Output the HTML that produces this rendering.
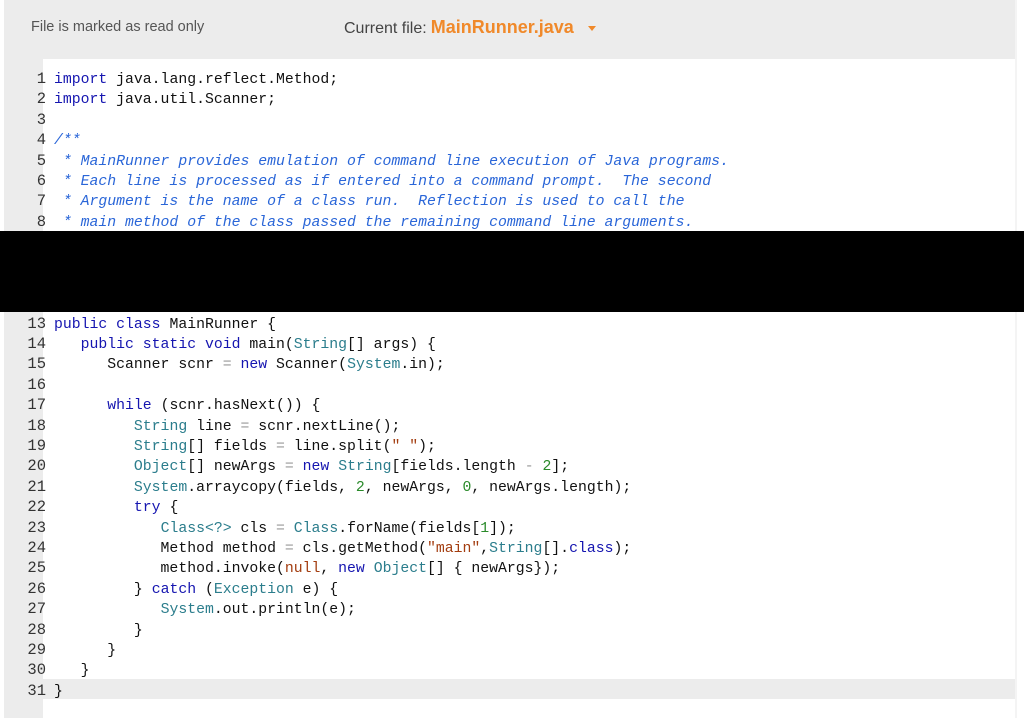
<!DOCTYPE html>
<html><head><meta charset="utf-8"><style>
*{margin:0;padding:0}
body{width:1024px;height:718px;background:#fff;position:relative;overflow:hidden;font-family:"Liberation Sans",sans-serif}
#top{position:absolute;left:4px;top:0;width:1011px;height:59px;background:#ececec}
#ro{position:absolute;left:27px;top:19px;font-size:14.5px;color:#555}
#cf{position:absolute;left:340px;top:17px;font-size:16px;color:#444}
#cf b{color:#f0892a;font-weight:bold;font-size:18px;margin-left:4px}
#cf i{display:inline-block;width:0;height:0;border-left:4px solid transparent;border-right:4px solid transparent;border-top:5px solid #f0892a;margin-left:14px;vertical-align:middle}
#gut{position:absolute;left:4px;top:59px;width:39px;height:659px;background:#ececec}
#edge{position:absolute;left:1015px;top:0;width:2px;height:718px;background:#f4f4f4}
#code{position:absolute;left:0;top:69px;font-family:"Liberation Mono",monospace;font-size:14.8px;color:#111}
.l{height:20.4px;line-height:20.4px;white-space:pre;position:relative}
.n{display:inline-block;width:54px;text-align:right;color:#333;padding-right:8px;box-sizing:border-box;font-size:15.5px}
.k{color:#1515b0}.t{color:#2b7d8c}.c{color:#2a66d8;font-style:italic}.g{color:#2a8a2a}.s{color:#a33d10}.o{color:#999}
.hl{position:absolute;left:4px;top:679px;width:1011px;height:20px;background:#ececec}
#black{position:absolute;left:0;top:231px;width:1024px;height:81px;background:#000}
</style></head><body>
<div id="top"><div id="ro">File is marked as read only</div><div id="cf">Current file:<b>MainRunner.java</b><i></i></div></div>
<div id="gut"></div><div class="hl"></div><div id="edge"></div>
<div id="code">
<div class="l"><span class="n">1</span><span class="k">import</span> java.lang.reflect.Method;</div>
<div class="l"><span class="n">2</span><span class="k">import</span> java.util.Scanner;</div>
<div class="l"><span class="n">3</span></div>
<div class="l"><span class="n">4</span><span class="c">/**</span></div>
<div class="l"><span class="n">5</span><span class="c"> * MainRunner provides emulation of command line execution of Java programs.</span></div>
<div class="l"><span class="n">6</span><span class="c"> * Each line is processed as if entered into a command prompt.  The second</span></div>
<div class="l"><span class="n">7</span><span class="c"> * Argument is the name of a class run.  Reflection is used to call the</span></div>
<div class="l"><span class="n">8</span><span class="c"> * main method of the class passed the remaining command line arguments.</span></div>
<div class="l"><span class="n">9</span></div>
<div class="l"><span class="n">10</span></div>
<div class="l"><span class="n">11</span></div>
<div class="l"><span class="n">12</span></div>
<div class="l"><span class="n">13</span><span class="k">public class</span> MainRunner {</div>
<div class="l"><span class="n">14</span>   <span class="k">public static void</span> main(<span class="t">String</span>[] args) {</div>
<div class="l"><span class="n">15</span>      Scanner scnr <span class="o">=</span> <span class="k">new</span> Scanner(<span class="t">System</span>.in);</div>
<div class="l"><span class="n">16</span></div>
<div class="l"><span class="n">17</span>      <span class="k">while</span> (scnr.hasNext()) {</div>
<div class="l"><span class="n">18</span>         <span class="t">String</span> line <span class="o">=</span> scnr.nextLine();</div>
<div class="l"><span class="n">19</span>         <span class="t">String</span>[] fields <span class="o">=</span> line.split(<span class="s">" "</span>);</div>
<div class="l"><span class="n">20</span>         <span class="t">Object</span>[] newArgs <span class="o">=</span> <span class="k">new</span> <span class="t">String</span>[fields.length <span class="o">-</span> <span class="g">2</span>];</div>
<div class="l"><span class="n">21</span>         <span class="t">System</span>.arraycopy(fields, <span class="g">2</span>, newArgs, <span class="g">0</span>, newArgs.length);</div>
<div class="l"><span class="n">22</span>         <span class="k">try</span> {</div>
<div class="l"><span class="n">23</span>            <span class="t">Class</span><span class="t">&lt;?&gt;</span> cls <span class="o">=</span> <span class="t">Class</span>.forName(fields[<span class="g">1</span>]);</div>
<div class="l"><span class="n">24</span>            Method method <span class="o">=</span> cls.getMethod(<span class="s">"main"</span>,<span class="t">String</span>[].<span class="k">class</span>);</div>
<div class="l"><span class="n">25</span>            method.invoke(<span class="s">null</span>, <span class="k">new</span> <span class="t">Object</span>[] { newArgs});</div>
<div class="l"><span class="n">26</span>         } <span class="k">catch</span> (<span class="t">Exception</span> e) {</div>
<div class="l"><span class="n">27</span>            <span class="t">System</span>.out.println(e);</div>
<div class="l"><span class="n">28</span>         }</div>
<div class="l"><span class="n">29</span>      }</div>
<div class="l"><span class="n">30</span>   }</div>
<div class="l"><span class="n">31</span>}</div>
</div>
<div id="black"></div>
</body></html>
